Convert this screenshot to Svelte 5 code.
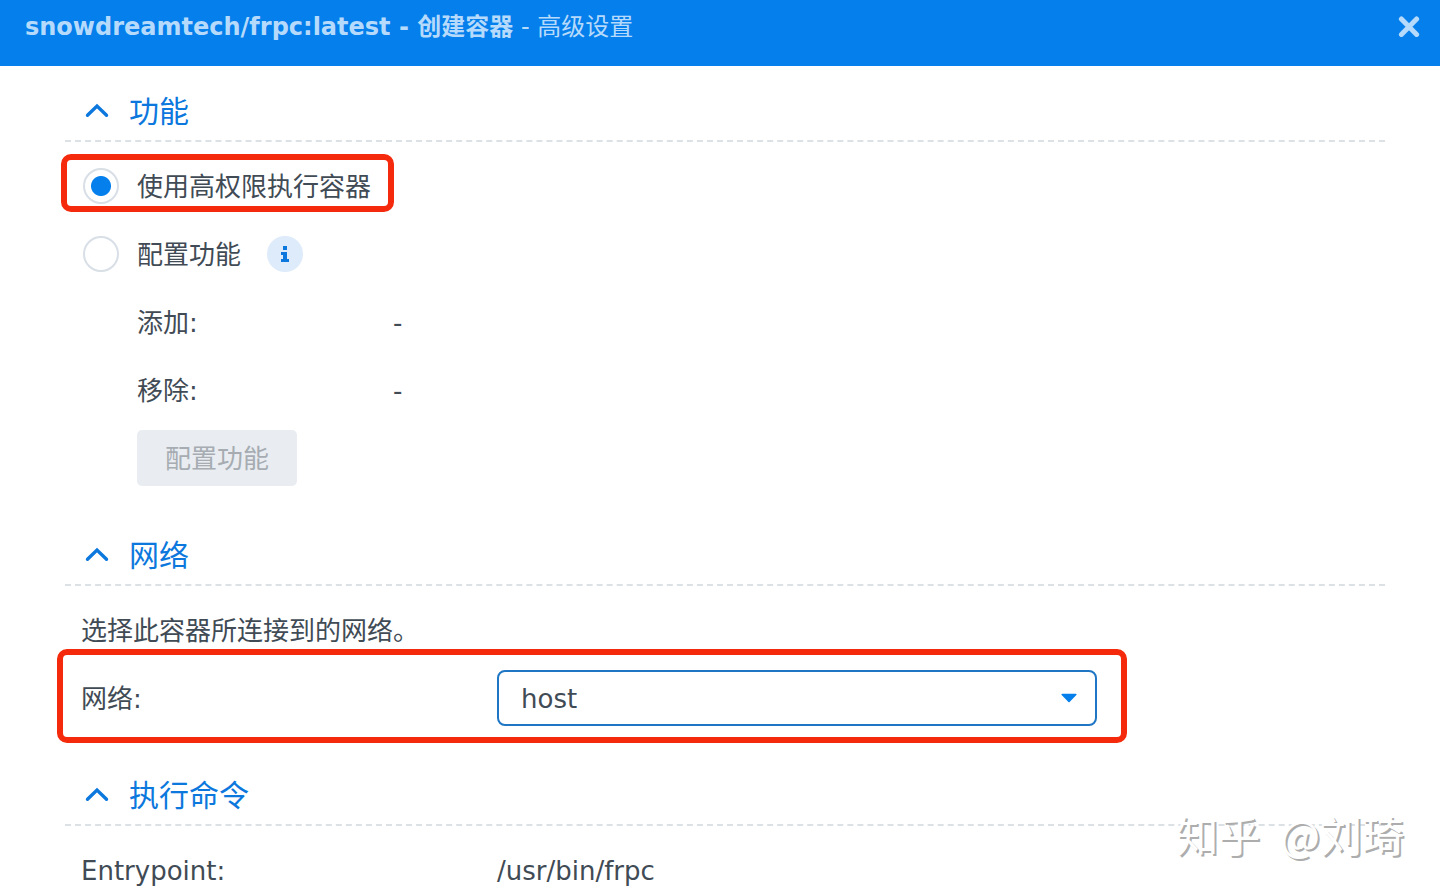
<script>
  let mode = $state('privileged');
  let network = $state('host');
  let open = $state({ capability: true, network: true, command: true });
</script>

{#snippet heading(key, title)}
  <h2>
    <button type="button" class="toggle" aria-expanded={open[key]} onclick={() => (open[key] = !open[key])}>
      <svg class:folded={!open[key]} width="24" height="18" viewBox="0 0 24 18" aria-hidden="true">
        <path d="M2.5 12.2 12 3l9.5 9.2" fill="none" stroke="currentColor" stroke-width="3.4" stroke-linecap="round" stroke-linejoin="miter" />
      </svg>
      <span>{title}</span>
    </button>
  </h2>
{/snippet}

<div class="dialog">
  <header>
    <h1><b>snowdreamtech/frpc:latest - 创建容器</b> - 高级设置</h1>
    <button type="button" class="close" aria-label="关闭">
      <svg width="22" height="22" viewBox="0 0 22 22" aria-hidden="true">
        <path d="M3.4 3 18.6 18.4M18.6 3 3.4 18.4" stroke="currentColor" stroke-width="5" stroke-linecap="round" />
      </svg>
    </button>
  </header>

  <main>
    <section>
      {@render heading('capability', '功能')}
      {#if open.capability}
        <div class="body indent">
          <div class="row">
            <label class="choice">
              <input type="radio" name="mode" value="privileged" bind:group={mode} />
              <span>使用高权限执行容器</span>
            </label>
            <span class="mark mark-choice"></span>
          </div>
          <div class="row">
            <label class="choice">
              <input type="radio" name="mode" value="custom" bind:group={mode} />
              <span>配置功能</span>
            </label>
            <button type="button" class="info" aria-label="说明">
              <svg width="10" height="18" viewBox="0 0 10 18" aria-hidden="true">
                <path d="M3 1h4v4H3zM1 7h6v7h2v3H1v-3h2v-4H1z" fill="currentColor" />
              </svg>
            </button>
          </div>
          <dl class="sub">
            <div class="row"><dt>添加:</dt><dd>-</dd></div>
            <div class="row"><dt>移除:</dt><dd>-</dd></div>
          </dl>
          <div class="row sub">
            <button type="button" class="configure" disabled={mode !== 'custom'}>配置功能</button>
          </div>
        </div>
      {/if}
    </section>

    <section>
      {@render heading('network', '网络')}
      {#if open.network}
        <div class="body">
          <div class="row"><p>选择此容器所连接到的网络。</p></div>
          <div class="row">
            <label class="name" for="network">网络:</label>
            <div class="combo">
              <select id="network" bind:value={network}>
                <option value="host">host</option>
                <option value="bridge">bridge</option>
              </select>
              <svg width="16" height="10" viewBox="0 0 16 10" aria-hidden="true">
                <path d="M1.2 1.5h13.6L8 8.5z" fill="currentColor" stroke="currentColor" stroke-width="1.6" stroke-linejoin="round" />
              </svg>
            </div>
            <span class="mark mark-network"></span>
          </div>
        </div>
      {/if}
    </section>

    <section>
      {@render heading('command', '执行命令')}
      {#if open.command}
        <dl class="body">
          <div class="row"><dt class="name">Entrypoint:</dt><dd>/usr/bin/frpc</dd></div>
        </dl>
      {/if}
    </section>
  </main>

  <div class="credit"><span>知乎</span><span>@刘琦</span></div>
</div>

<style>
  :global(body) {
    margin: 0;
    overflow: hidden;
    background: #fff;
  }

  .dialog {
    position: relative;
    height: 100vh;
    overflow: hidden;
    font-family: 'DejaVu Sans', 'Noto Sans CJK SC', sans-serif;
    font-size: 26px;
    line-height: 36px;
    color: #414b55;
  }

  h1, h2, p, dl, dt, dd {
    margin: 0;
    font: inherit;
  }

  button, select, input {
    font: inherit;
    color: inherit;
    margin: 0;
  }

  button {
    padding: 0;
    border: 0;
    background: none;
  }

  svg {
    display: block;
  }

  header {
    display: flex;
    justify-content: space-between;
    align-items: center;
    padding: 10px 20px 22px 25px;
    background: #057feb;
    color: #b6dafb;
  }

  h1 {
    font-size: 24px;
    line-height: 34px;
    white-space: nowrap;
  }

  main {
    padding: 18px 55px 0 65px;
  }

  section {
    padding-bottom: 36px;
  }

  h2 {
    padding-left: 20px;
    border-bottom: 2px dashed #dce1e5;
    font-size: 30px;
    line-height: 56px;
    color: #0c78dd;
  }

  .toggle {
    display: flex;
    align-items: center;
    gap: 20px;
  }

  .folded {
    transform: rotate(180deg);
  }

  .body {
    padding: 10px 16px 0;
  }

  .indent {
    padding-left: 18px;
  }

  .row {
    position: relative;
    display: flex;
    align-items: center;
    min-height: 68px;
  }

  .sub {
    padding-left: 54px;
  }

  p, dt, dd, .name, .choice span {
    padding-top: 2px;
  }

  dt {
    width: 256px;
  }

  .name {
    width: 416px;
    flex: none;
  }

  .choice {
    display: flex;
    align-items: center;
    gap: 18px;
  }

  input {
    appearance: none;
    box-sizing: border-box;
    width: 36px;
    height: 36px;
    border: 2px solid #d8dfe6;
    border-radius: 50%;
    background: #fff;
  }

  input:checked {
    background: radial-gradient(circle, #057feb 9.5px, #fff 10.5px);
  }

  .info {
    display: grid;
    place-items: center;
    width: 36px;
    height: 36px;
    margin-left: 26px;
    border-radius: 50%;
    background: #deebfa;
    color: #0c78dd;
  }

  .configure {
    height: 56px;
    padding: 2px 28px 0;
    border-radius: 5px;
    background: #e9edf1;
    color: #a6acb2;
  }

  .combo {
    position: relative;
    flex: 0 1 600px;
  }

  select {
    appearance: none;
    box-sizing: border-box;
    width: 100%;
    height: 56px;
    padding: 2px 50px 0 22px;
    border: 2px solid #1f76c4;
    border-radius: 8px;
    background: #fff;
    display: block;
  }

  .combo svg {
    position: absolute;
    right: 20px;
    top: 23px;
    color: #057feb;
    pointer-events: none;
  }

  .mark {
    position: absolute;
    box-sizing: border-box;
    border: 6px solid #f5290c;
    border-radius: 10px;
    pointer-events: none;
  }

  .mark-choice {
    left: -22px;
    top: 2px;
    width: 333px;
    height: 58px;
  }

  .mark-network {
    left: -24px;
    top: -15px;
    width: 1070px;
    height: 94px;
  }

  .credit {
    position: absolute;
    right: 36px;
    bottom: 32px;
    display: flex;
    gap: 20px;
    font-family: 'Noto Sans CJK SC', sans-serif;
    font-size: 42px;
    line-height: 60px;
    color: #fff;
    text-shadow: 2px 2px 0 #adadad;
  }
</style>
